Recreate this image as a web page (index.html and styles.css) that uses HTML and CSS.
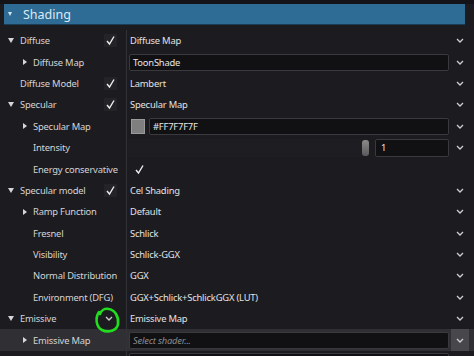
FILE: index.html
```html
<!DOCTYPE html>
<html lang="en">
<head>
    <meta charset="UTF-8">
    <meta name="viewport" content="width=device-width, initial-scale=1.0">
    <title>Shading</title>
    <link rel="stylesheet" href="styles.css">
</head>
<body>
    <div class="panel">
        <div class="header"><span class="tri-down big"></span>Shading</div>
        <div class="rows">
            <div class="row">
                <div class="label"><span class="arrow"><span class="tri-down"></span></span><span class="name">Diffuse</span><span class="check"><svg width="13" height="13"><path d="M3 7 L5.5 10 L10 2.5" /></svg></span></div>
                <div class="value">Diffuse Map</div>
                <div class="chev"><svg width="8" height="5"><polyline points="1,1 4,4 7,1" /></svg></div>
            </div>
            <div class="row">
                <div class="label sub"><span class="arrow"><span class="tri-right"></span></span><span class="name">Diffuse Map</span></div>
                <div class="value"><div class="field">ToonShade</div></div>
                <div class="chev"><svg width="8" height="5"><polyline points="1,1 4,4 7,1" /></svg></div>
            </div>
            <div class="row">
                <div class="label"><span class="arrow"></span><span class="name">Diffuse Model</span><span class="check"><svg width="13" height="13"><path d="M3 7 L5.5 10 L10 2.5" /></svg></span></div>
                <div class="value">Lambert</div>
                <div class="chev"><svg width="8" height="5"><polyline points="1,1 4,4 7,1" /></svg></div>
            </div>
            <div class="row">
                <div class="label"><span class="arrow"><span class="tri-down"></span></span><span class="name">Specular</span><span class="check"><svg width="13" height="13"><path d="M3 7 L5.5 10 L10 2.5" /></svg></span></div>
                <div class="value">Specular Map</div>
                <div class="chev"><svg width="8" height="5"><polyline points="1,1 4,4 7,1" /></svg></div>
            </div>
            <div class="row">
                <div class="label sub"><span class="arrow"><span class="tri-right"></span></span><span class="name">Specular Map</span></div>
                <div class="value"><span class="swatch"></span><div class="field">#FF7F7F7F</div></div>
                <div class="chev"><svg width="8" height="5"><polyline points="1,1 4,4 7,1" /></svg></div>
            </div>
            <div class="row">
                <div class="label sub"><span class="arrow"></span><span class="name">Intensity</span></div>
                <div class="value"><div class="slider"><span class="knob"></span></div><div class="field num">1</div></div>
                <div class="chev"><svg width="8" height="5"><polyline points="1,1 4,4 7,1" /></svg></div>
            </div>
            <div class="row">
                <div class="label sub"><span class="arrow"></span><span class="name">Energy conservative</span></div>
                <div class="value"><span class="check plain"><svg width="13" height="13"><path d="M3 7 L5.5 10 L10 2.5" /></svg></span></div>
                <div class="chev"></div>
            </div>
            <div class="row">
                <div class="label"><span class="arrow"><span class="tri-down"></span></span><span class="name">Specular model</span><span class="check"><svg width="13" height="13"><path d="M3 7 L5.5 10 L10 2.5" /></svg></span></div>
                <div class="value">Cel Shading</div>
                <div class="chev"><svg width="8" height="5"><polyline points="1,1 4,4 7,1" /></svg></div>
            </div>
            <div class="row">
                <div class="label sub"><span class="arrow"><span class="tri-right"></span></span><span class="name">Ramp Function</span></div>
                <div class="value">Default</div>
                <div class="chev"><svg width="8" height="5"><polyline points="1,1 4,4 7,1" /></svg></div>
            </div>
            <div class="row">
                <div class="label sub"><span class="arrow"></span><span class="name">Fresnel</span></div>
                <div class="value">Schlick</div>
                <div class="chev"><svg width="8" height="5"><polyline points="1,1 4,4 7,1" /></svg></div>
            </div>
            <div class="row">
                <div class="label sub"><span class="arrow"></span><span class="name">Visibility</span></div>
                <div class="value">Schlick-GGX</div>
                <div class="chev"><svg width="8" height="5"><polyline points="1,1 4,4 7,1" /></svg></div>
            </div>
            <div class="row">
                <div class="label sub"><span class="arrow"></span><span class="name">Normal Distribution</span></div>
                <div class="value">GGX</div>
                <div class="chev"><svg width="8" height="5"><polyline points="1,1 4,4 7,1" /></svg></div>
            </div>
            <div class="row">
                <div class="label sub"><span class="arrow"></span><span class="name">Environment (DFG)</span></div>
                <div class="value">GGX+Schlick+SchlickGGX (LUT)</div>
                <div class="chev"><svg width="8" height="5"><polyline points="1,1 4,4 7,1" /></svg></div>
            </div>
            <div class="row">
                <div class="label"><span class="arrow"><span class="tri-down"></span></span><span class="name">Emissive</span><span class="check mark"><svg width="8" height="5"><polyline points="1,1 4,4 7,1" /></svg></span>
                    <svg class="scribble" width="32" height="30"><path d="M7 6 C3 12, 4 21, 10 24 C16 27, 25 25, 26 18 C27 11, 23 4, 17 3 C12 2, 9 5, 8 8" /></svg>
                </div>
                <div class="value">Emissive Map</div>
                <div class="chev"><svg width="8" height="5"><polyline points="1,1 4,4 7,1" /></svg></div>
            </div>
            <div class="row active">
                <div class="label sub"><span class="arrow"><span class="tri-right"></span></span><span class="name">Emissive Map</span></div>
                <div class="value"><div class="field empty">Select shader...</div></div>
                <div class="chev boxed"><svg width="8" height="5"><polyline points="1,1 4,4 7,1" /></svg></div>
            </div>
            <div class="row">
                <div class="label sub"><span class="arrow"></span><span class="name"></span></div>
                <div class="value"><div class="field"></div></div>
                <div class="chev"></div>
            </div>
        </div>
    </div>
</body>
</html>
```

FILE: styles.css
```css
html, body {
    margin: 0;
    height: 100%;
    overflow: hidden;
}
body {
    background-color: #1c1b20;
    font-family: 'Noto Sans', 'Open Sans', sans-serif;
    font-size: 9.4px;
    letter-spacing: -0.2px;
    color: #d4d4d4;
}
.panel {
    border-top: 4px solid #141317;
}
.header {
    display: flex;
    align-items: center;
    height: 20px;
    margin: 0 9px 0 4px;
    background-color: #2e6c95;
    border-bottom: 1px solid #1b3d55;
    color: #dce9f3;
    font-size: 12.5px;
    letter-spacing: 0;
    padding-left: 4px;
}
.rows {
    margin-top: 5px;
}
.row {
    display: flex;
    height: 21.4px;
    align-items: stretch;
}
.row.active {
    background-color: #303034;
}
.label {
    position: relative;
    display: flex;
    align-items: center;
    width: 127px;
    flex: none;
    box-sizing: border-box;
    padding-left: 8px;
    border-right: 1px solid #323236;
    white-space: nowrap;
}
.label.sub {
    padding-left: 23px;
}
.arrow {
    display: flex;
    align-items: center;
    width: 12px;
    flex: none;
}
.label.sub .arrow {
    width: 10px;
}
.tri-down {
    width: 0;
    height: 0;
    border-left: 3px solid transparent;
    border-right: 3px solid transparent;
    border-top: 5px solid #d6d6d6;
}
.tri-down.big {
    border-left-width: 2.5px;
    border-right-width: 2.5px;
    border-top-width: 4px;
    border-top-color: #d4e4ef;
    margin-right: 11px;
}
.tri-right {
    width: 0;
    height: 0;
    border-top: 3px solid transparent;
    border-bottom: 3px solid transparent;
    border-left: 4px solid #d6d6d6;
}
.check {
    display: flex;
    align-items: center;
    justify-content: center;
    width: 13px;
    height: 13px;
    margin-left: auto;
    margin-right: 9px;
    background-color: #242428;
}
.check svg path {
    fill: none;
    stroke: #eeeeee;
    stroke-width: 1.4;
}
.check.plain {
    margin: 0 0 0 3px;
    background: none;
}
.check.mark {
    background: none;
    margin-right: 11px;
}
.chev svg polyline,
.check.mark svg polyline {
    fill: none;
    stroke: #cfcfcf;
    stroke-width: 1.3;
}
.scribble {
    position: absolute;
    left: 92px;
    top: -2px;
}
.scribble path {
    fill: none;
    stroke: #22dd1e;
    stroke-width: 2.6;
    stroke-linecap: round;
}
.value {
    flex: 1;
    display: flex;
    align-items: center;
    padding-left: 3px;
    color: #e2e2e2;
    white-space: nowrap;
    min-width: 0;
}
.field {
    flex: 1;
    height: 17px;
    margin-left: -1px;
    box-sizing: border-box;
    display: flex;
    align-items: center;
    padding-left: 3px;
    background-color: #111114;
    border: 1px solid #3a3a3e;
    border-radius: 2px;
    color: #e6e6e6;
}
.field.empty {
    font-style: italic;
    color: #8c8c8c;
}
.field.num {
    flex: none;
    width: 74px;
    height: 18px;
    margin-left: 6px;
    padding-left: 5px;
}
.swatch {
    width: 14px;
    height: 15px;
    flex: none;
    margin: 0 5px 0 1px;
    box-sizing: border-box;
    background-color: #7f7f7f;
    border: 1px solid #9a9a9a;
}
.slider {
    flex: 1;
    height: 18px;
    margin-left: -2px;
    display: flex;
    align-items: center;
    justify-content: flex-end;
    background-color: #1e1d22;
}
.knob {
    width: 7px;
    height: 16px;
    border-radius: 3px;
    background: linear-gradient(#8a8a8a, #5a5a5c);
}
.chev {
    width: 18px;
    flex: none;
    margin: 0 5px 0 2px;
    display: flex;
    align-items: center;
    justify-content: center;
}
.chev.boxed {
    background-color: #48484c;
}
```
